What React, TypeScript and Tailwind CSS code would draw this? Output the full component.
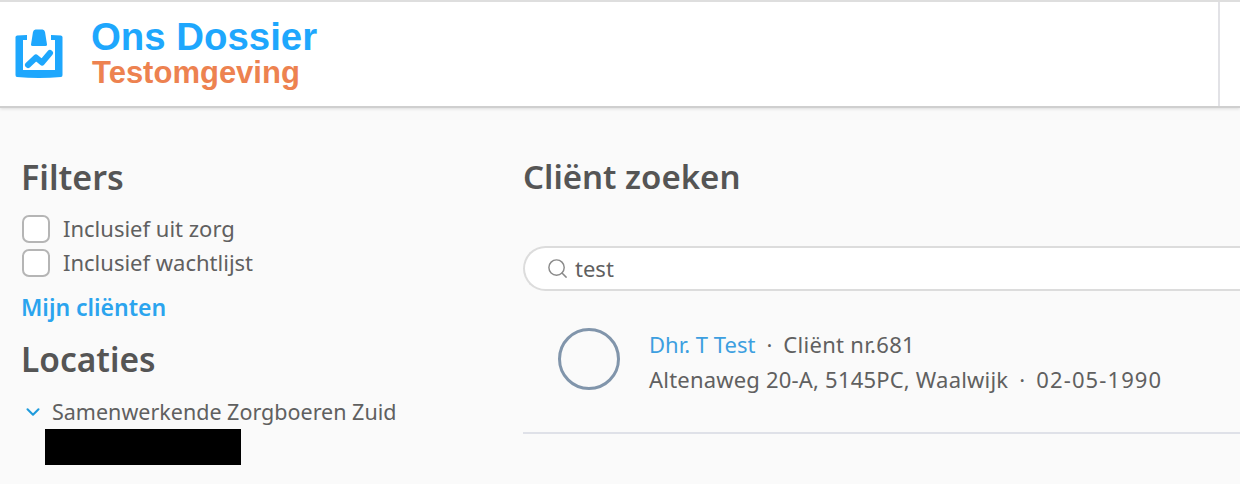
import React from 'react';
import { ChevronDown, Search } from 'lucide-react';

const plex = "font-['Noto_Sans',sans-serif]";

const Logo = () => (
  <svg width="48" height="50" viewBox="0 0 48 50" fill="none">
    <path d="M2 6.500L12 6V11H8V41H40V11H36V6L46 6.500Q47.500 7 47.500 8V46Q47.500 48 46 48Q24 50 2 48Q0.500 48 0.500 46V8Q0.500 7 2 6.500Z" fill="#1ea7fd" />
    <path d="M20.500 0.500H27.500Q29.500 0.500 30 3L32 15.500Q32 17 30.500 17H17.500Q16 17 16 15.500L18 3Q18.500 0.500 20.500 0.500Z" fill="#1ea7fd" />
    <path d="M13 36L21 28.500L27 33.500L35 24" stroke="#1ea7fd" strokeWidth="6" strokeLinecap="round" strokeLinejoin="round" />
  </svg>
);

const Checkbox = ({ label }: { label: string }) => (
  <label className="flex items-center h-[28px] gap-[13px]">
    <span className="w-[28px] h-[28px] rounded-[7px] border-2 border-[#b5b5b5] bg-white" />
    <span className="text-[22px] leading-none -mt-[2px] text-[#606060]">{label}</span>
  </label>
);

export default function App() {
  return (
    <div className={`h-[484px] w-[1240px] overflow-hidden bg-[#fafafa] ${plex}`}>
      {/* Header */}
      <header className="h-[108px] bg-white border-t-2 border-t-[#dedede] border-b-2 border-b-[#cfcfcf] shadow-[0_1px_3px_rgba(0,0,0,0.12)] flex">
        <div className="w-[1220px] flex items-center pl-[15px] border-r-2 border-r-[#e2e2e6]">
          <Logo />
          <div className="ml-[28px] font-['Liberation_Sans',sans-serif] font-bold">
            <div className="text-[38.4px] leading-[37px] text-[#1ea7fd]">Ons Dossier</div>
            <div className="ml-px text-[31px] leading-[35px] text-[#ed8250]">Testomgeving</div>
          </div>
        </div>
      </header>

      <div className="flex">
        {/* Filters */}
        <aside className="w-[523px] shrink-0 pl-[22px] pt-[47px]">
          <h2 className="-ml-px text-[34px] leading-[44px] font-semibold text-[#555555]">Filters</h2>
          <div className="mt-[16px] flex flex-col gap-[6px]">
            <Checkbox label="Inclusief uit zorg" />
            <Checkbox label="Inclusief wachtlijst" />
          </div>
          <a className="block -ml-px mt-[14px] text-[23px] leading-[32px] font-semibold text-[#2ba4ee]">Mijn cliënten</a>
          <h2 className="-ml-px mt-[14px] text-[33.500px] leading-[44px] font-semibold text-[#555555]">Locaties</h2>
          <div className="mt-[18px] flex items-center">
            <ChevronDown size={22} strokeWidth={2.25} className="text-[#1f9bdc]" />
            <span className="ml-[8px] text-[21.500px] leading-[26px] text-[#606060]">Samenwerkende Zorgboeren Zuid</span>
          </div>
          <div className="ml-[23px] mt-[4px] w-[196px] h-[36px] bg-black" />
        </aside>

        {/* Zoeken */}
        <main className="flex-1 pt-[47px]">
          <h1 className="text-[33px] leading-[44px] font-semibold text-[#555555]">Cliënt zoeken</h1>
          <div className="mt-[47px] h-[45px] w-[740px] bg-white border-2 border-r-0 border-[#dcdcdc] rounded-l-[23px] flex items-center pl-[21px]">
            <Search size={23} strokeWidth={1.500} className="text-[#8a8a8a]" />
            <span className="ml-[6px] text-[22px] text-[#606060]">test</span>
          </div>
          <div className="h-[143px] pl-[35px] flex items-center border-b-2 border-b-[#dfe1e8]">
            <div className="w-[62px] h-[62px] rounded-full border-[3px] border-[#8195ab] -mt-[5px]" />
            <div className="ml-[29px] mt-[1px] text-[22px] leading-[35px] text-[#606060]">
              <div>
                <span className="text-[#3d9fe0]">Dhr. T Test</span>
                <span className="mx-[11px]">·</span>
                <span className="tracking-[0.3px]">Cliënt nr.681</span>
              </div>
              <div className="tracking-[0.2px]">
                Altenaweg 20-A, 5145PC, Waalwijk<span className="mx-[11px]">·</span>
                <span className="tracking-[1.1px]">02-05-1990</span>
              </div>
            </div>
          </div>
        </main>
      </div>
    </div>
  );
}
